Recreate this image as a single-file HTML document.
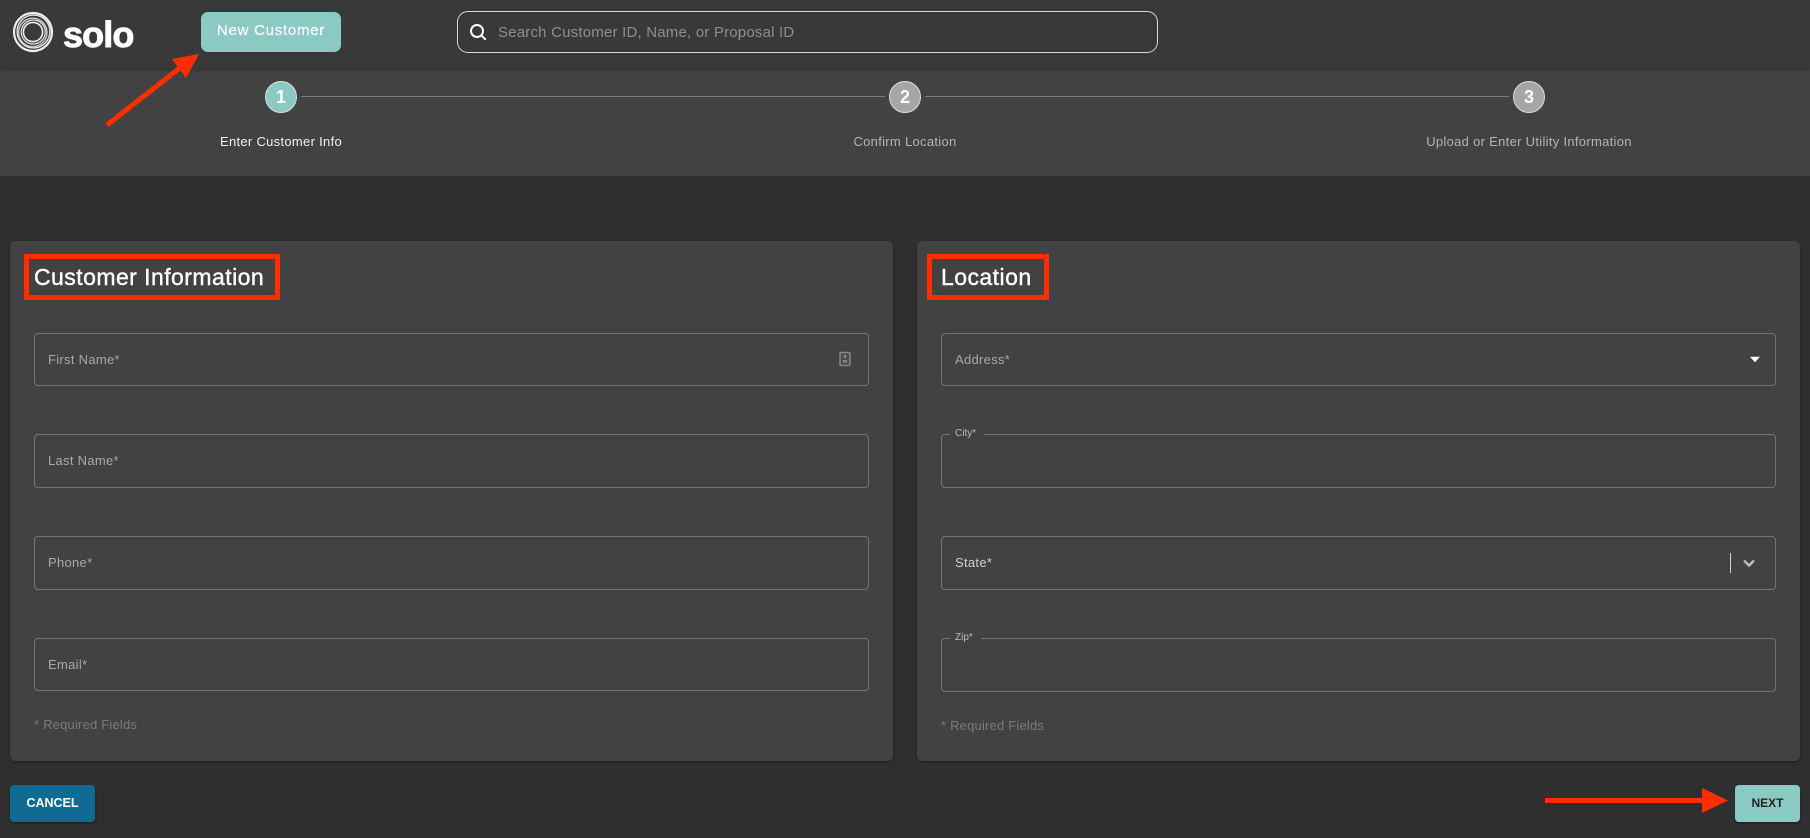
<!DOCTYPE html>
<html lang="en">
<head>
<meta charset="utf-8">
<title>Solo</title>
<style>
html,body{margin:0;padding:0;width:1810px;height:838px;overflow:hidden;background:#2f2f2f;font-family:"Liberation Sans",sans-serif}
*{box-sizing:border-box}
.abs,.t{position:absolute}
.t{white-space:nowrap;line-height:20px;height:20px;font-size:13px;letter-spacing:.3px}
#hdr{position:absolute;left:0;top:0;width:1810px;height:68px;background:#393939;box-shadow:0 1px 4px rgba(0,0,0,.35);z-index:2}
#stp{position:absolute;left:0;top:68px;width:1810px;height:108px;background:#424242}
#btn{position:absolute;left:201px;top:12px;width:140px;height:40px;background:#8bcac3;border-radius:7px;color:#fff;font-size:15px;letter-spacing:.75px;line-height:38px;text-align:center;-webkit-text-stroke:.2px #fff}
#search{position:absolute;left:457px;top:11px;width:701px;height:42px;border:1px solid #d8d8d8;border-radius:11px}
.line{position:absolute;top:96px;height:1px;background:#7e7e7e}
.c{position:absolute;top:81px;width:32px;height:32px;border-radius:50%;border:1px solid #ddd;background:#a6a6a6;color:#fff;font-size:18px;font-weight:bold;text-align:center;line-height:30px}
.lbl{width:300px;text-align:center;top:132px;color:#b4b4b4}
.panel{position:absolute;top:241px;width:883px;height:520px;background:#424242;border-radius:5px;box-shadow:0 1px 2px rgba(0,0,0,.4)}
.red{position:absolute;top:254px;height:46px;border:5px solid #ff2d00}
.h{font-size:23px;letter-spacing:.45px;color:#fff;-webkit-text-stroke:.4px #fff;line-height:28px;height:28px;top:263px}
.f{position:absolute;width:835px;height:53px;border:1px solid #747474;border-radius:4px}
.p{color:#a9a9a9}
.req{color:#7b7b7b;letter-spacing:.2px}
.notch{position:absolute;height:3px;background:#424242}
.small{font-size:10px;letter-spacing:0;color:#bcbcbc}
.b{position:absolute;top:785px;height:37px;border-radius:4px;text-align:center;line-height:36px;font-weight:bold;box-shadow:0 1px 2px rgba(0,0,0,.4)}
</style>
</head>
<body>
<div id="stp"></div>
<div id="hdr">
  <svg class="abs" style="left:10px;top:8px" width="48" height="48" viewBox="0 0 48 48" fill="none" stroke="#fff">
    <circle cx="23" cy="24" r="19" stroke-width="2.2" stroke="#eee"/>
    <circle cx="23.5" cy="23.5" r="16.4" stroke-width="1.4" stroke="#e4e4e4"/>
    <circle cx="22.8" cy="24.4" r="14.2" stroke-width="1.4" stroke="#c8c8c8"/>
    <circle cx="23.3" cy="24" r="12" stroke-width="1.3" stroke="#ddd"/>
    <circle cx="23" cy="24" r="9.6" stroke-width="1.6" stroke="#eee"/>
  </svg>
  <div class="t" style="left:63px;top:21px;font-size:36px;line-height:28px;height:28px;font-weight:bold;letter-spacing:-.9px;color:#fff;-webkit-text-stroke:.9px #fff">solo</div>
  <div id="btn">New Customer</div>
  <div id="search"></div>
  <svg class="abs" style="left:468px;top:22px" width="20" height="20" viewBox="0 0 20 20" fill="none" stroke="#fff" stroke-width="2"><circle cx="9" cy="9" r="6"/><path d="M13.4 13.4 L17.2 17.2" stroke-linecap="round"/></svg>
  <div class="t" style="left:498px;top:23px;font-size:15px;letter-spacing:.2px;color:#8f8f8f">Search Customer ID, Name, or Proposal ID</div>
</div>

<div class="line" style="left:301px;width:584px"></div>
<div class="line" style="left:925px;width:584px"></div>
<div class="c" style="left:265px;background:#8bcac3">1</div>
<div class="c" style="left:889px">2</div>
<div class="c" style="left:1513px">3</div>
<div class="t lbl" style="left:131px;color:#f2f2f2">Enter Customer Info</div>
<div class="t lbl" style="left:755px">Confirm Location</div>
<div class="t lbl" style="left:1379px">Upload or Enter Utility Information</div>

<div class="panel" style="left:10px"></div>
<div class="panel" style="left:917px"></div>

<div class="red" style="left:24px;width:256px"></div>
<div class="red" style="left:927px;width:122px"></div>
<div class="t h" style="left:34px">Customer Information</div>
<div class="t h" style="left:941px">Location</div>

<div class="f" style="left:34px;top:333px"></div>
<div class="f" style="left:34px;top:434px;height:54px"></div>
<div class="f" style="left:34px;top:536px;height:54px"></div>
<div class="f" style="left:34px;top:638px;height:53px"></div>
<div class="t p" style="left:48px;top:350px">First Name*</div>
<div class="t p" style="left:48px;top:451px">Last Name*</div>
<div class="t p" style="left:48px;top:553px">Phone*</div>
<div class="t p" style="left:48px;top:655px">Email*</div>
<svg class="abs" style="left:838px;top:351px" width="14" height="16" viewBox="0 0 14 16" fill="none"><rect x="2" y="1.5" width="10" height="13" rx="1" fill="#4e4e4e" stroke="#868686" stroke-width="1.5"/><path d="M7 4v3" stroke="#8a8a8a" stroke-width="2"/><path d="M5 9h4v2.5H5z" fill="#8a8a8a"/></svg>
<div class="t req" style="left:34px;top:715px">* Required Fields</div>

<div class="f" style="left:941px;top:333px"></div>
<div class="f" style="left:941px;top:434px;height:54px"></div>
<div class="f" style="left:941px;top:536px;height:54px"></div>
<div class="f" style="left:941px;top:638px;height:54px"></div>
<div class="notch" style="left:950px;top:433px;width:34px"></div>
<div class="notch" style="left:950px;top:637px;width:31px"></div>
<div class="t p" style="left:955px;top:350px">Address*</div>
<div class="t small" style="left:955px;top:424px">City*</div>
<div class="t p" style="left:955px;top:553px;color:#cfcfcf">State*</div>
<div class="t small" style="left:955px;top:628px">Zip*</div>
<svg class="abs" style="left:1749px;top:356px" width="12" height="7" viewBox="0 0 12 7"><path d="M1 .8h10L6 6.2z" fill="#fff"/></svg>
<div class="abs" style="left:1730px;top:553px;width:1px;height:20px;background:#d0d0d0"></div>
<svg class="abs" style="left:1742px;top:558px" width="14" height="10" viewBox="0 0 14 10" fill="none"><path d="M2 2.5l5 5 5-5" stroke="#bdbdbd" stroke-width="2.4"/></svg>
<div class="t req" style="left:941px;top:716px">* Required Fields</div>

<div class="b" style="left:10px;width:85px;background:#106b93;color:#fff;font-size:12.5px">CANCEL</div>
<div class="b" style="left:1735px;width:65px;background:#8bcac3;color:#222;font-size:12px">NEXT</div>

<svg class="abs" style="left:0;top:0;z-index:3" width="1810" height="838" viewBox="0 0 1810 838">
  <path d="M107 125 L181 67" stroke="#ff2d00" stroke-width="5" fill="none"/>
  <path d="M199 54 L172 59 L186 78 Z" fill="#ff2d00"/>
  <path d="M1545 800.5 H1705" stroke="#ff2d00" stroke-width="5" fill="none"/>
  <path d="M1728 800.5 L1702 788 V813 Z" fill="#ff2d00"/>
</svg>
</body>
</html>
